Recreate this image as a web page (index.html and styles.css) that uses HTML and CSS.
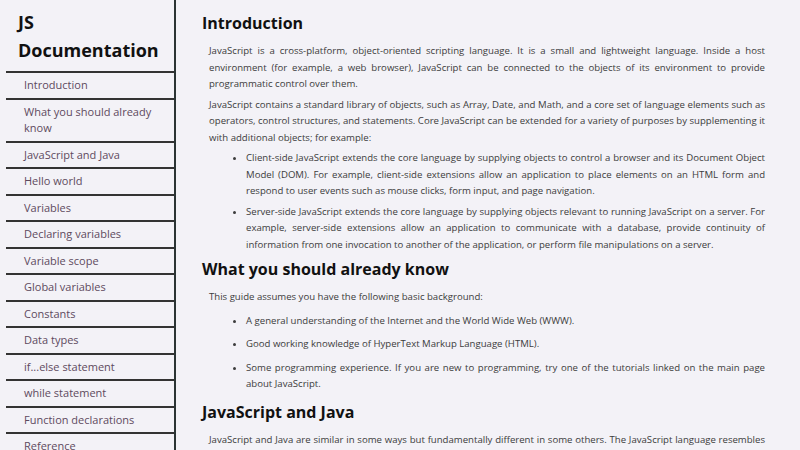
FILE: index.html
```html
<!DOCTYPE html>
<html lang="en">
<head>
<meta charset="utf-8">
<title>JS Documentation</title>
<link rel="stylesheet" href="styles.css">
</head>
<body>
<nav class="navbar" id="navbar">
  <header class="nav-title">JS Documentation</header>
  <ul class="nav-list">
    <li><a class="nav-link" href="#Introduction">Introduction</a></li>
    <li><a class="nav-link" href="#What_you_should_already_know">What you should already know</a></li>
    <li><a class="nav-link" href="#JavaScript_and_Java">JavaScript and Java</a></li>
    <li><a class="nav-link" href="#Hello_world">Hello world</a></li>
    <li><a class="nav-link" href="#Variables">Variables</a></li>
    <li><a class="nav-link" href="#Declaring_variables">Declaring variables</a></li>
    <li><a class="nav-link" href="#Variable_scope">Variable scope</a></li>
    <li><a class="nav-link" href="#Global_variables">Global variables</a></li>
    <li><a class="nav-link" href="#Constants">Constants</a></li>
    <li><a class="nav-link" href="#Data_types">Data types</a></li>
    <li><a class="nav-link" href="#if...else_statement">if...else statement</a></li>
    <li><a class="nav-link" href="#while_statement">while statement</a></li>
    <li><a class="nav-link" href="#Function_declarations">Function declarations</a></li>
    <li><a class="nav-link" href="#Reference">Reference</a></li>
  </ul>
</nav>
<main class="main-doc" id="main-doc">
  <section class="main-section" id="Introduction">
    <h2 class="section-title">Introduction</h2>
    <p class="text">JavaScript is a cross-platform, object-oriented scripting language. It is a small and lightweight language. Inside a host environment (for example, a web browser), JavaScript can be connected to the objects of its environment to provide programmatic control over them.</p>
    <p class="text">JavaScript contains a standard library of objects, such as Array, Date, and Math, and a core set of language elements such as operators, control structures, and statements. Core JavaScript can be extended for a variety of purposes by supplementing it with additional objects; for example:</p>
    <ul class="bullets">
      <li>Client-side JavaScript extends the core language by supplying objects to control a browser and its Document Object Model (DOM). For example, client-side extensions allow an application to place elements on an HTML form and respond to user events such as mouse clicks, form input, and page navigation.</li>
      <li>Server-side JavaScript extends the core language by supplying objects relevant to running JavaScript on a server. For example, server-side extensions allow an application to communicate with a database, provide continuity of information from one invocation to another of the application, or perform file manipulations on a server.</li>
    </ul>
  </section>
  <section class="main-section" id="What_you_should_already_know">
    <h2 class="section-title">What you should already know</h2>
    <p class="text">This guide assumes you have the following basic background:</p>
    <ul class="bullets loose">
      <li>A general understanding of the Internet and the World Wide Web (WWW).</li>
      <li>Good working knowledge of HyperText Markup Language (HTML).</li>
      <li>Some programming experience. If you are new to programming, try one of the tutorials linked on the main page about JavaScript.</li>
    </ul>
  </section>
  <section class="main-section" id="JavaScript_and_Java">
    <h2 class="section-title">JavaScript and Java</h2>
    <p class="text">JavaScript and Java are similar in some ways but fundamentally different in some others. The JavaScript language resembles Java but does not have Java's static typing and strong type checking. JavaScript follows most Java expression syntax, naming conventions and basic control-flow constructs.</p>
  </section>
</main>
</body>
</html>
```
FILE: styles.css
```css
html, body {
  margin: 0;
  padding: 0;
  height: 100%;
}
body {
  display: flex;
  background: #f3f2f7;
  font-family: "Open Sans", "DejaVu Sans", sans-serif;
  color: #3c3c3c;
  overflow: hidden;
}
.navbar {
  flex: 0 0 176px;
  height: 100%;
  border-right: 2px solid #2b3434;
  padding-left: 6px;
  box-sizing: border-box;
}
.nav-title {
  font-size: 18px;
  font-weight: 700;
  line-height: 28px;
  color: #111;
  padding: 8px 0 7px 12px;
}
.nav-list {
  list-style: none;
  margin: 0;
  padding: 0;
}
.nav-list li {
  border-top: 2px solid #333;
}
.nav-link {
  display: block;
  padding: 4px 8px 4px 18px;
  font-size: 11px;
  line-height: 16.5px;
  color: #5e4a5e;
  text-decoration: none;
}
.main-doc {
  flex: 1;
  padding: 11px 35px 0 26px;
  min-width: 0;
}
.section-title {
  margin: 0 0 8px;
  font-size: 16px;
  line-height: 24px;
  font-weight: 700;
  color: #111;
}
.text {
  margin: 0 0 4px 7px;
  font-size: 9.6px;
  line-height: 16.5px;
  text-align: justify;
}
.bullets {
  margin: 0;
  padding-left: 44px;
  font-size: 9.6px;
  line-height: 16.5px;
  text-align: justify;
}
.bullets li {
  margin-bottom: 4px;
}
.bullets.loose {
  margin-top: 7px;
}
.bullets.loose li {
  margin-bottom: 7px;
}
```
